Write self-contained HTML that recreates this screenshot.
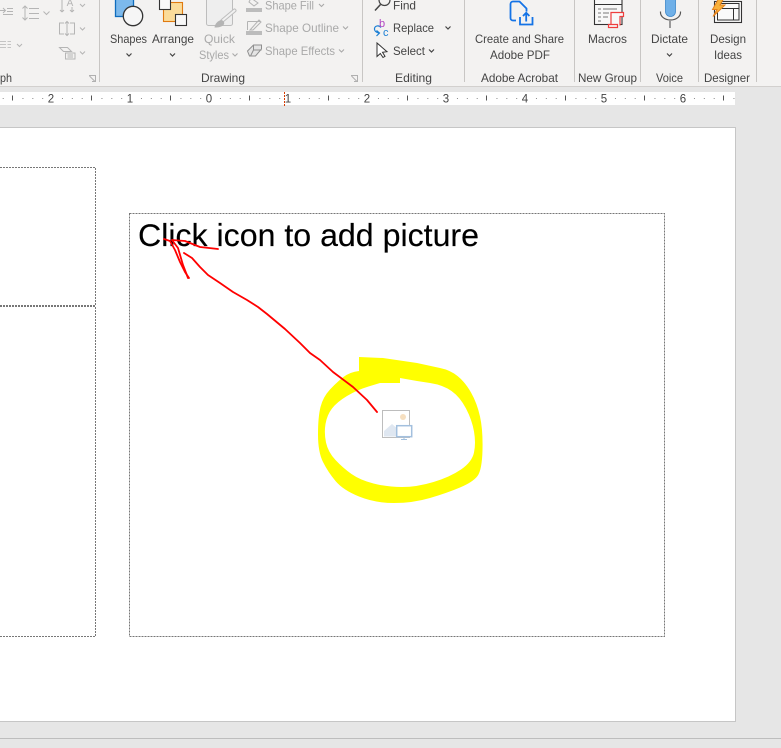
<!DOCTYPE html>
<html>
<head>
<meta charset="utf-8">
<style>
html,body{margin:0;padding:0;background:#e6e6e6;width:781px;height:748px;overflow:hidden}
svg{display:block}
text{font-family:"Liberation Sans",sans-serif}
.t{font-size:12px;fill:#444}
.g{font-size:12px;fill:#a9a9a9}
</style>
</head>
<body>
<svg width="781" height="748" viewBox="0 0 781 748" xmlns="http://www.w3.org/2000/svg">
<rect width="781" height="748" fill="#e6e6e6"/>
<!-- ribbon -->
<rect width="781" height="86" fill="#f3f2f1"/>
<rect y="86" width="781" height="1" fill="#d2d0ce"/>
<g fill="#c8c6c4">
<rect x="99" width="1" height="82"/><rect x="362" width="1" height="82"/><rect x="464" width="1" height="82"/>
<rect x="574" width="1" height="82"/><rect x="640" width="1" height="82"/><rect x="698" width="1" height="82"/><rect x="756" width="1" height="82"/>
</g>

<!-- paragraph faded icons -->
<g fill="none" stroke="#b5b5b5" stroke-width="1">
<path d="M0 10.500H5M3 8l2.500 2.500L3 13M7 8.500H13M7 11.500H13M3 14.500H13"/>
<path d="M25 6V20M22.500 8.500L25 6l2.500 2.500M22.500 17.500L25 20l2.500-2.500M29 8.500H39M29 13.500H39M29 18.500H39"/>
<path d="M43.500 11.500l3 3 3-3M17 44l2.500 2.500L22 44"/>
<path d="M0 41.500H6M0 44.500H6M0 47.500H6M7.500 41.500H11M7.500 44.500H11M7.500 47.500H11" stroke="#c4c4c4"/>
<path d="M62 0V12M62 12l-2-2M62 12l2-2M72 7V12M72 12l-2-2M72 12l2-2"/>
<path d="M80 4l2.500 2.500L85 4M80 27.500l2.500 2.500 2.500-2.500M80 51.500l2.500 2.500 2.500-2.500"/>
<path d="M64 23H59.500V34H64M70 23H74.500V34H70M67 21V36M65 23.500l2-2 2 2M65 33.500l2 2 2-2"/>
<path d="M59.500 47.500h8l4 4h-8zM65.500 53H75V59H65.500zM67.500 55H73M67.500 57H73"/>
</g>
<text x="70" y="6" font-size="10" fill="#b5b5b5" text-anchor="middle">A</text>
<text class="t" x="0" y="82" textLength="12" lengthAdjust="spacingAndGlyphs">ph</text>
<path d="M89 75.500H95.500V82M89.500 76L95 81.500M92 81.500H95.500" fill="none" stroke="#b0b0b0"/>

<!-- Shapes -->
<rect x="115.500" y="-2" width="18" height="18.500" fill="#7cb9ec" stroke="#0f6cbd" stroke-width="1.300"/>
<circle cx="133" cy="16" r="9.700" fill="#f6f6f6" stroke="#333" stroke-width="1.300"/>
<text class="t" x="110" y="43" textLength="37" lengthAdjust="spacingAndGlyphs">Shapes</text>
<path d="M126.500 53.500l2.500 2.500 2.500-2.500" fill="none" stroke="#444" stroke-width="1.200"/>
<!-- Arrange -->
<rect x="163.500" y="2.500" width="19" height="19" fill="#fbdc9a" stroke="#e07a10" stroke-width="1.100"/>
<rect x="159.500" y="-2" width="11" height="11.500" fill="#f8f8f8" stroke="#333" stroke-width="1.100"/>
<rect x="175.500" y="14.500" width="11" height="11" fill="#f8f8f8" stroke="#333" stroke-width="1.100"/>
<text class="t" x="152" y="43" textLength="42" lengthAdjust="spacingAndGlyphs">Arrange</text>
<path d="M170 53.500l2.500 2.500 2.500-2.500" fill="none" stroke="#444" stroke-width="1.200"/>
<!-- Quick styles -->
<rect x="206.500" y="-4" width="26" height="29.500" rx="2" fill="#eeeeee" stroke="#bdbdbd"/>
<path d="M234.500 10.500L222.500 20.500" stroke="#bdbdbd" stroke-width="4" fill="none" stroke-linecap="round"/>
<path d="M234.500 10.500L222.500 20.500" stroke="#f1f1f1" stroke-width="2" fill="none" stroke-linecap="round"/>
<path d="M214.500 27.500c.5-4 3.500-7 7-7.500 2.500 1 3.500 3 2 5-3 2.500-6 2.500-9 2.500z" fill="#b4b4b4"/>
<text class="g" x="204" y="43" textLength="31" lengthAdjust="spacingAndGlyphs">Quick</text>
<text class="g" x="199" y="59" textLength="30" lengthAdjust="spacingAndGlyphs">Styles</text>
<path d="M232.500 53.500l2.500 2.500 2.500-2.500" fill="none" stroke="#a9a9a9" stroke-width="1.100"/>

<!-- Shape fill/outline/effects -->
<g fill="none" stroke="#b3b3b3">
<path d="M251 -2l7 5-4 3-5-4z"/><rect x="246" y="8" width="16" height="4" fill="#bcbcbc" stroke="none"/>
<path d="M247.500 21.500H260M247.500 21.500V30M250 30l9-10 2 2-8 8z"/><rect x="246" y="31" width="16" height="4" fill="#bcbcbc" stroke="none"/>
<path d="M247.500 51l6-6h8v4l-6 7h-6z" fill="#e4e4e4" stroke="#8f8f8f"/><path d="M253.500 45v5h8M253.500 50l-3 6" stroke="#8f8f8f"/>
</g>
<text class="g" x="265" y="9.500" textLength="49" lengthAdjust="spacingAndGlyphs">Shape Fill</text>
<text class="g" x="265" y="32" textLength="74" lengthAdjust="spacingAndGlyphs">Shape Outline</text>
<text class="g" x="265" y="55" textLength="70" lengthAdjust="spacingAndGlyphs">Shape Effects</text>
<g fill="none" stroke="#a9a9a9" stroke-width="1.100">
<path d="M319 4l2.500 2.500L324 4M343 26.500l2.500 2.500 2.500-2.500M339 49.500l2.500 2.500 2.500-2.500"/>
</g>
<path d="M351 75.500H357.500V82M351.500 76L357 81.500M354 81.500H357.500" fill="none" stroke="#b0b0b0"/>
<text class="t" x="201" y="82" textLength="44" lengthAdjust="spacingAndGlyphs">Drawing</text>

<!-- Editing -->
<circle cx="384.500" cy="0" r="5.500" fill="none" stroke="#444" stroke-width="1.200"/>
<path d="M380.500 4.500L375 10.500" stroke="#444" stroke-width="1.500"/>
<text class="t" x="393" y="9.500" textLength="23" lengthAdjust="spacingAndGlyphs">Find</text>
<path d="M381 27.500c-2-2.500-6-2-6.500 1-.3 2.500 2 4 4.500 4.500M376.500 36l3-3-3-2.500" fill="none" stroke="#1b7fd4" stroke-width="1.200"/>
<text x="379" y="27" font-size="11" fill="#b146c2">b</text>
<text x="383" y="36" font-size="11" fill="#1b7fd4">c</text>
<text class="t" x="393" y="32" textLength="41" lengthAdjust="spacingAndGlyphs">Replace</text>
<path d="M445.500 26.500l2.500 2.500 2.500-2.500" fill="none" stroke="#444" stroke-width="1.200"/>
<path d="M377 43V56.500l3.300-3 2.700 4 2-1.200-2.500-4 4.500-.6z" fill="#fff" stroke="#333"/>
<text class="t" x="393" y="55" textLength="32" lengthAdjust="spacingAndGlyphs">Select</text>
<path d="M429 49.500l2.500 2.500 2.500-2.500" fill="none" stroke="#444" stroke-width="1.200"/>
<text class="t" x="395" y="82" textLength="37" lengthAdjust="spacingAndGlyphs">Editing</text>

<!-- Adobe -->
<path d="M516 20.500H513a2.500 2.500 0 0 1-2.500-2.500V4a2.500 2.500 0 0 1 2.500-2.500h6.500l7 7v3" fill="none" stroke="#1473e6" stroke-width="1.800" stroke-linejoin="round"/>
<path d="M520 17v7.500h12.500V17" fill="none" stroke="#1473e6" stroke-width="1.800"/>
<path d="M526.200 21.500V13M523 16l3.200-3.200 3.200 3.200" fill="none" stroke="#1473e6" stroke-width="1.800"/>
<text class="t" x="475" y="43" textLength="89" lengthAdjust="spacingAndGlyphs">Create and Share</text>
<text class="t" x="490" y="59" textLength="60" lengthAdjust="spacingAndGlyphs">Adobe PDF</text>
<text class="t" x="481" y="82" textLength="77" lengthAdjust="spacingAndGlyphs">Adobe Acrobat</text>

<!-- Macros -->
<rect x="594.500" y="-3" width="27.500" height="27.500" fill="#f8f8f8" stroke="#333" stroke-width="1.100"/>
<path d="M594.500 4.500H622" stroke="#333" stroke-width="1.100"/>
<path d="M598 9h3M603 9h14M598 13h3M603 13h6M598 17h3M603 17h5M598 21h3" stroke="#777" stroke-width="1"/>
<path d="M611 24V12.500h12.500V16.500H620V25.500" fill="#f8f8f8" stroke="#ee3d3d" stroke-width="1.200"/>
<path d="M608.500 24.500H617.500V27.500H608.500z" fill="#f8f8f8" stroke="#ee3d3d" stroke-width="1.200"/>
<text class="t" x="588" y="43" textLength="39" lengthAdjust="spacingAndGlyphs">Macros</text>
<text class="t" x="578" y="82" textLength="59" lengthAdjust="spacingAndGlyphs">New Group</text>

<!-- Dictate -->
<rect x="665.500" y="-8" width="10" height="24.500" rx="5" fill="#6fb0e8" stroke="#3d87c9" stroke-width=".8"/>
<path d="M660.500 11.500v1a10 7.500 0 0 0 20 0v-1" fill="none" stroke="#555" stroke-width="1.200"/>
<rect x="669" y="20" width="2" height="8" fill="#999"/>
<text class="t" x="651" y="43" textLength="37" lengthAdjust="spacingAndGlyphs">Dictate</text>
<path d="M667 53.500l2.500 2.500 2.500-2.500" fill="none" stroke="#444" stroke-width="1.200"/>
<text class="t" x="656" y="82" textLength="27" lengthAdjust="spacingAndGlyphs">Voice</text>

<!-- Design -->
<rect x="714.500" y="1.500" width="27" height="21" fill="#fafafa" stroke="#333" stroke-width="1.100"/>
<path d="M717.500 3.500H739V20H717.500zM722 8.500H739M733.500 8.500V20" fill="none" stroke="#333" stroke-width="1"/>
<path d="M719 -2L712.500 9.500h4.500L713 16.500 725 5h-5l3.500-6z" fill="#f8b13a" stroke="#e6811a" stroke-width="1"/>
<text class="t" x="710" y="43" textLength="36" lengthAdjust="spacingAndGlyphs">Design</text>
<text class="t" x="714" y="59" textLength="28" lengthAdjust="spacingAndGlyphs">Ideas</text>
<text class="t" x="704" y="82" textLength="46" lengthAdjust="spacingAndGlyphs">Designer</text>

<!-- ruler -->
<rect y="92" width="735" height="13" fill="#fff"/>
<line x1="2.700" y1="98.500" x2="735" y2="98.500" stroke="#8a8a8a" stroke-width="1" stroke-dasharray="1 8.875"/>
<g fill="#fff">
<rect x="45" y="92" width="12" height="13"/><rect x="124" y="92" width="12" height="13"/><rect x="203" y="92" width="12" height="13"/>
<rect x="282" y="92" width="12" height="13"/><rect x="361" y="92" width="12" height="13"/><rect x="440" y="92" width="12" height="13"/>
<rect x="519" y="92" width="12" height="13"/><rect x="598" y="92" width="12" height="13"/><rect x="677" y="92" width="12" height="13"/>
<rect x="10" y="92" width="5" height="13"/><rect x="89" y="92" width="5" height="13"/><rect x="168" y="92" width="5" height="13"/><rect x="247" y="92" width="5" height="13"/><rect x="326" y="92" width="5" height="13"/><rect x="405" y="92" width="5" height="13"/><rect x="484" y="92" width="5" height="13"/><rect x="563" y="92" width="5" height="13"/><rect x="642" y="92" width="5" height="13"/><rect x="721" y="92" width="5" height="13"/>
</g>
<path d="M12.500 95.500V100.500M91.500 95.500V100.500M170.500 95.500V100.500M249.500 95.500V100.500M328.500 95.500V100.500M407.500 95.500V100.500M486.500 95.500V100.500M565.500 95.500V100.500M644.500 95.500V100.500M723.500 95.500V100.500" stroke="#555" stroke-width="1"/>
<g text-anchor="middle" font-size="11.500" fill="#444">
<text x="51" y="102.500">2</text><text x="130" y="102.500">1</text><text x="209" y="102.500">0</text>
<text x="288" y="102.500">1</text><text x="367" y="102.500">2</text><text x="446" y="102.500">3</text>
<text x="525" y="102.500">4</text><text x="604" y="102.500">5</text><text x="683" y="102.500">6</text>
</g>
<line x1="284.500" y1="92" x2="284.500" y2="106" stroke="#d83b01" stroke-width="1" stroke-dasharray="2 1"/>

<!-- slide -->
<rect x="-2" y="127" width="737" height="594" fill="#fff"/>
<path d="M0 127.500H735.500V721.500H0" fill="none" stroke="#c6c6c6" stroke-width="1"/>
<rect y="738" width="781" height="1" fill="#bdbdbd"/>

<!-- placeholders -->
<g fill="none" stroke="#777" stroke-width="1" stroke-dasharray="2 1">
<path d="M0 167.500H95.500V305.500H0"/>
<path d="M0 306.500H95.500V636.500H0"/>
<rect x="129.500" y="213.500" width="535" height="423"/>
</g>
<text x="138" y="246" font-size="31.500" fill="#000" stroke="#000" stroke-width=".15" textLength="341" lengthAdjust="spacingAndGlyphs">Click icon to add picture</text>

<!-- picture icon -->
<rect x="382.500" y="410.500" width="27" height="27" fill="#fff" stroke="#bdbdbd" stroke-width="1"/>
<circle cx="403" cy="417" r="3" fill="#f6dfc0"/>
<path d="M384 436.500V431l8-7 7 6v6.500z" fill="#dfe7f1"/>
<rect x="396.700" y="425.700" width="15" height="11" fill="#fff" stroke="#a3c0de" stroke-width="1.500"/>
<path d="M404 437.500V439.500M401 439.500H407" stroke="#a3c0de" stroke-width="1"/>

<!-- yellow highlighter -->
<path fill="#ffff00" fill-rule="evenodd" d="M359 357L383 358L417 363L440 368Q450 370 457.500 376Q465 382 471 392.500Q477 403 480 416.500Q483 430 482.500 450Q482 470 477.500 476Q473 482 460 487.500Q447 493 430 498Q413 503 394 503Q375 503 359 496.500Q343 490 335.500 481Q328 472 323 462Q318 452 318 434.500Q318 417 320.500 407Q323 397 330 389.500Q337 382 343.500 377Q350 372 359 371Z
M400 378V383H380L368.500 386.500Q357 390 347 396Q337 402 332 408.500Q327 415 325.500 424Q324 433 326 442.500Q328 452 335.500 460Q343 468 351.500 474Q360 480 373.500 483.500Q387 487 402 487Q417 487 433.500 482Q450 477 461 469.500Q472 462 474 452.500Q476 443 474 431.500Q472 420 466 408.500Q460 397 451.500 391Q443 385 430 383L417 381Z"/>

<!-- red ink -->
<g fill="none" stroke="#ff0000" stroke-width="1.800" stroke-linejoin="round" stroke-linecap="round">
<path d="M184 253L192 258L200 267L208 275L220 283L233 292L247 300L258 307L267 314L285 329L300 343L310 353L320 360L333 372L353 387L367 400L377 412"/>
<path d="M164 239L170 241L175 250L180 262L185 272L189 278"/>
<path d="M172 240L178 248L183 265L188 278"/>
<path d="M172 240L185 241L200 247L218 249"/>
</g>
</svg>
</body>
</html>
